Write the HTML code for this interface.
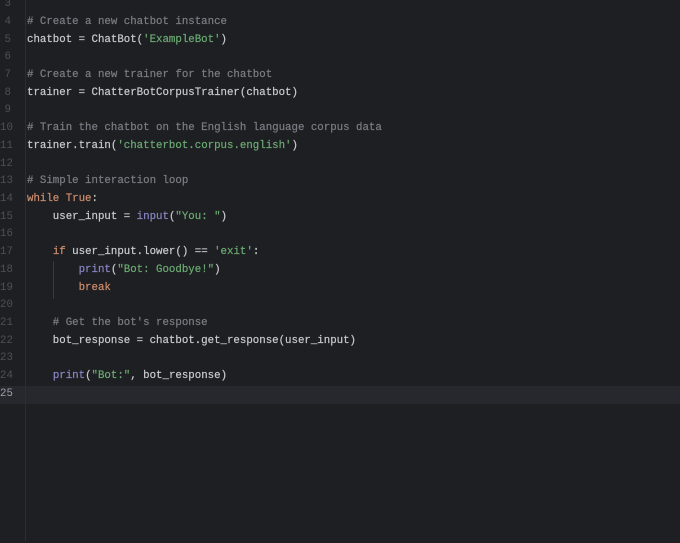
<!DOCTYPE html><html><head><style>
body{margin:0;background:#1e1f22;width:680px;height:541px;overflow:hidden;font-family:"Liberation Mono",monospace;font-size:10.75px;}
.g{position:absolute;left:25px;top:0;width:1px;height:541px;background:#2b2d30}
.w{position:absolute;left:0;top:2px;width:680px;height:541px}
.l{position:absolute;left:0;width:680px;height:17.7px;line-height:17.7px;white-space:pre;color:#c9cbd0;-webkit-text-stroke:0.2px}
.n{position:absolute;left:0;width:11px;text-align:right;color:#4b5059;-webkit-text-stroke:0}
.c{position:absolute;left:27px}
.cm{color:#7a7e85}.s{color:#6aab73}.k{color:#cf8e6d}.b{color:#8888c6}
.cur{background:#26282e}.cur .n{color:#a1a3ab}
.ig{position:absolute;left:53px;top:259px;width:1px;height:38px;background:#393b40}
</style></head><body>
<div class="w">
<div class="l" style="top:-6px"><span class="n">3</span></div>
<div class="l" style="top:12px"><span class="n">4</span><span class="c cm"># Create a new chatbot instance</span></div>
<div class="l" style="top:30px"><span class="n">5</span><span class="c">chatbot = ChatBot(<span class="s">'ExampleBot'</span>)</span></div>
<div class="l" style="top:47px"><span class="n">6</span></div>
<div class="l" style="top:65px"><span class="n">7</span><span class="c cm"># Create a new trainer for the chatbot</span></div>
<div class="l" style="top:83px"><span class="n">8</span><span class="c">trainer = ChatterBotCorpusTrainer(chatbot)</span></div>
<div class="l" style="top:100px"><span class="n">9</span></div>
<div class="l" style="top:118px"><span class="n">10</span><span class="c cm"># Train the chatbot on the English language corpus data</span></div>
<div class="l" style="top:136px"><span class="n">11</span><span class="c">trainer.train(<span class="s">'chatterbot.corpus.english'</span>)</span></div>
<div class="l" style="top:154px"><span class="n">12</span></div>
<div class="l" style="top:171px"><span class="n">13</span><span class="c cm"># Simple interaction loop</span></div>
<div class="l" style="top:189px"><span class="n">14</span><span class="c"><span class="k">while True</span>:</span></div>
<div class="l" style="top:207px"><span class="n">15</span><span class="c">    user_input = <span class="b">input</span>(<span class="s">"You: "</span>)</span></div>
<div class="l" style="top:224px"><span class="n">16</span></div>
<div class="l" style="top:242px"><span class="n">17</span><span class="c">    <span class="k">if</span> user_input.lower() == <span class="s">'exit'</span>:</span></div>
<div class="l" style="top:260px"><span class="n">18</span><span class="c">        <span class="b">print</span>(<span class="s">"Bot: Goodbye!"</span>)</span></div>
<div class="l" style="top:278px"><span class="n">19</span><span class="c">        <span class="k">break</span></span></div>
<div class="l" style="top:295px"><span class="n">20</span></div>
<div class="l" style="top:313px"><span class="n">21</span><span class="c cm">    # Get the bot's response</span></div>
<div class="l" style="top:331px"><span class="n">22</span><span class="c">    bot_response = chatbot.get_response(user_input)</span></div>
<div class="l" style="top:348px"><span class="n">23</span></div>
<div class="l" style="top:366px"><span class="n">24</span><span class="c">    <span class="b">print</span>(<span class="s">"Bot:"</span>, bot_response)</span></div>
<div class="l cur" style="top:384px"><span class="n">25</span></div>
<div class="ig"></div>
</div>
<div class="g"></div>
</body></html>
